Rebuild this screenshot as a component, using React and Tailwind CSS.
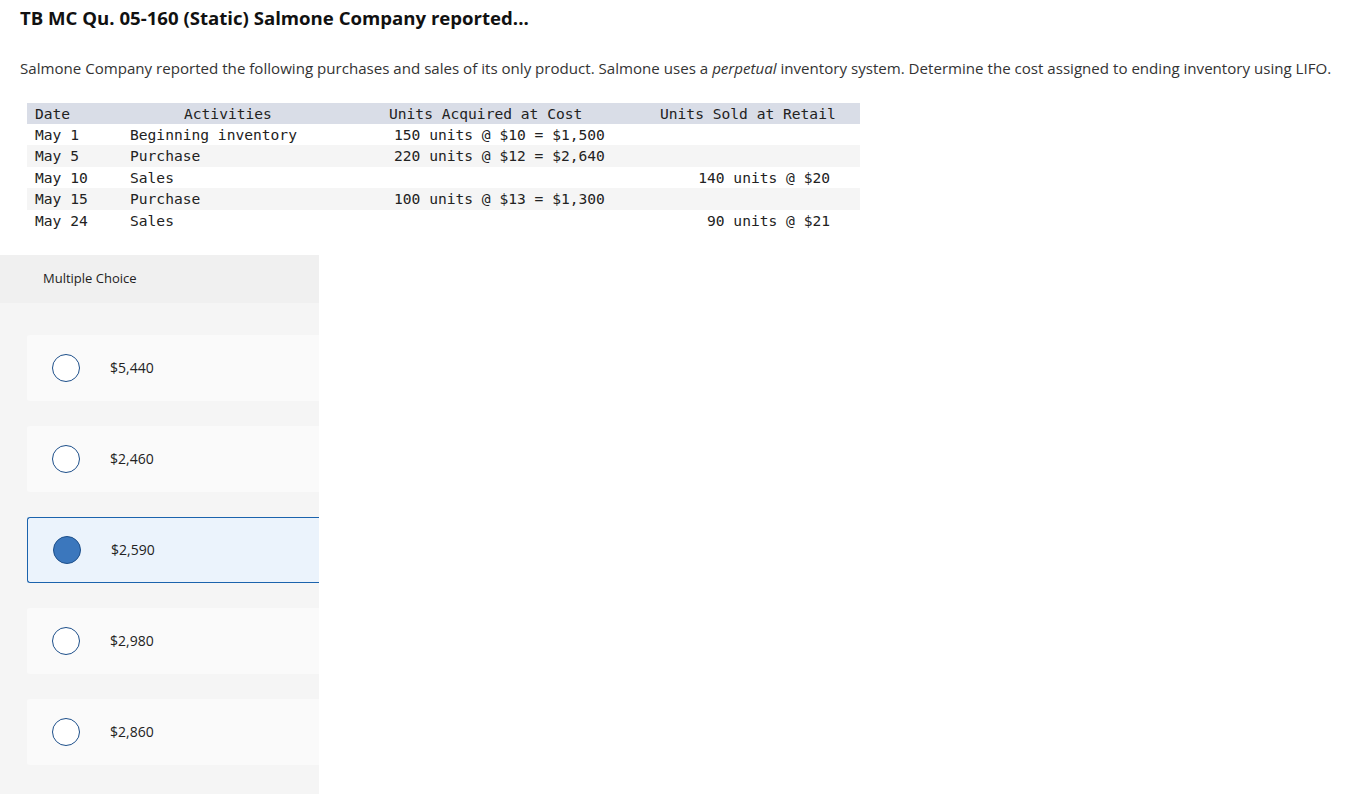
import React from 'react';

const rows = [
  { date: 'May 1', act: 'Beginning inventory', cost: '150 units @ $10 = $1,500', sold: '' },
  { date: 'May 5', act: 'Purchase', cost: '220 units @ $12 = $2,640', sold: '' },
  { date: 'May 10', act: 'Sales', cost: '', sold: '140 units @ $20' },
  { date: 'May 15', act: 'Purchase', cost: '100 units @ $13 = $1,300', sold: '' },
  { date: 'May 24', act: 'Sales', cost: '', sold: '90 units @ $21' },
];

const choices = ['$5,440', '$2,460', '$2,590', '$2,980', '$2,860'];
const selected = 2;

const Radio = ({ checked }) =>
  checked ? (
    <span className="block w-7 h-7 rounded-full bg-[#3b77bd] border-[1.5px] border-[#1d4f8a]" />
  ) : (
    <span className="block w-7 h-7 rounded-full bg-white border-[1.5px] border-[#1d4f8a]" />
  );

export default function App() {
  return (
    <div className="min-h-screen bg-white text-[#222] font-['Open_Sans',sans-serif]">
      <div className="px-5 pt-[7px]">
        <h1 className="text-[18.6px] font-bold text-[#111] leading-[22px]">
          TB MC Qu. 05-160 (Static) Salmone Company reported...
        </h1>
        <p className="mt-[29px] text-[15.1px] text-[#333] leading-[20px]">
          Salmone Company reported the following purchases and sales of its only product. Salmone uses a{' '}
          <em>perpetual</em> inventory system. Determine the cost assigned to ending inventory using LIFO.
        </p>
      </div>

      {/* inventory table */}
      <div className="ml-[27px] mt-[25px] w-[833px] font-['DejaVu_Sans_Mono',monospace] text-[14.6px] text-[#222]">
        <div className="grid grid-cols-[95px_260px_255px_223px] h-[21px] items-center bg-[#d9dde7]">
          <div className="pl-2">Date</div>
          <div className="pl-[62px]">Activities</div>
          <div className="pl-[7px]">Units Acquired at Cost</div>
          <div className="pl-[23px]">Units Sold at Retail</div>
        </div>
        {rows.map((r, i) => (
          <div
            key={r.date}
            className={`grid grid-cols-[95px_260px_255px_223px] h-[21.4px] items-center ${
              i % 2 === 1 ? 'bg-[#f5f5f5]' : 'bg-white'
            }`}
          >
            <div className="pl-2 whitespace-pre">{r.date}</div>
            <div className="pl-2 whitespace-pre">{r.act}</div>
            <div className="pl-[12px] whitespace-pre">{r.cost}</div>
            <div className="pr-[30px] text-right whitespace-pre">{r.sold}</div>
          </div>
        ))}
      </div>

      {/* multiple choice */}
      <div className="mt-[24px] w-[319px] bg-[#f5f5f5] pb-[29px]">
        <div className="h-[48px] bg-[#f0f0f0] flex items-center pl-[43px] text-[13px] text-[#222]">
          Multiple Choice
        </div>
        <div className="pt-[32px] pl-[27px] flex flex-col gap-[25px]">
          {choices.map((c, i) => (
            <div
              key={c}
              className={`h-[66px] flex items-center pl-[25px] rounded-l-[3px] ${
                i === selected
                  ? 'bg-[#ebf3fc] border border-r-0 border-[#1b63ad] pl-[24px]'
                  : 'bg-[#fafafa]'
              }`}
            >
              <Radio checked={i === selected} />
              <span className="ml-[30px] text-[14px] text-[#222]">{c}</span>
            </div>
          ))}
        </div>
      </div>
    </div>
  );
}
